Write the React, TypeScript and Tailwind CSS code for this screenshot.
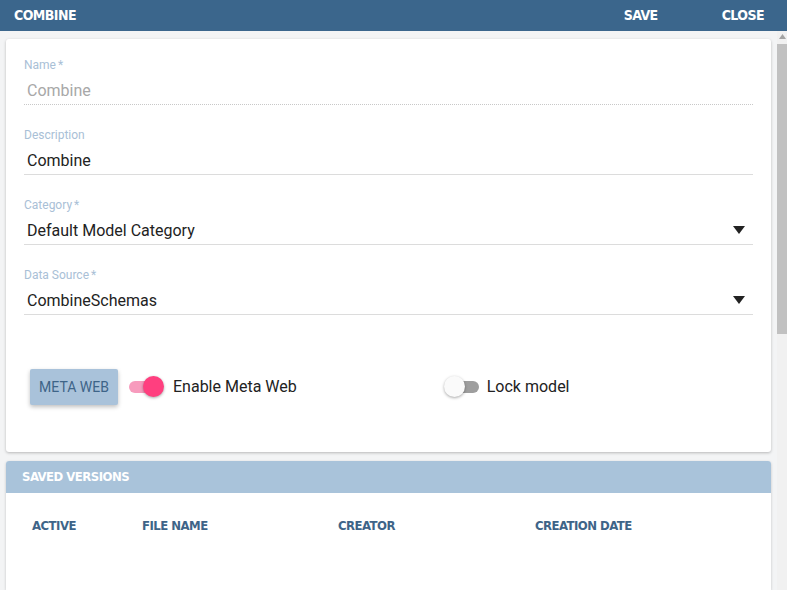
import React from 'react';

const cond = "[font-family:'DejaVu_Sans_Condensed','DejaVu_Sans',sans-serif] font-stretch-condensed font-bold tracking-[-0.04em]";

function Field({ label, value, required, disabled, select }: { label: string; value: string; required?: boolean; disabled?: boolean; select?: boolean }) {
  return (
    <div className="h-[70px] pt-[19px]">
      <div className="text-[12px] leading-[14px] text-[#a9c0d6]">
        {label}
        {required && <span className="ml-[2px]">*</span>}
      </div>
      <div
        className={`mt-[10px] flex h-[23px] items-start justify-between pl-[3px] text-[16px] leading-[18px] ${
          disabled ? 'border-b border-dotted border-[#c8c8c8] text-[#a8a8a8]' : 'border-b border-[#dcdcdc] text-[#222]'
        }`}
      >
        <span>{value}</span>
        {select && (
          <svg width="12" height="8" viewBox="0 0 12 8" className="mr-[8px] mt-[4px]">
            <path d="M0 0h12L6 8z" fill="#222" />
          </svg>
        )}
      </div>
    </div>
  );
}

function Toggle({ on }: { on: boolean }) {
  return (
    <div className="relative h-[22px] w-[36px]">
      <div className={`absolute left-[0px] top-[5px] h-[12px] w-[34px] rounded-full ${on ? 'bg-[#f79bbd]' : 'bg-[#9e9e9e]'}`} />
      <div
        className={`absolute top-0 h-[21px] w-[21px] rounded-full shadow-[0_1px_3px_rgba(0,0,0,0.35)] ${
          on ? 'left-[14px] bg-[#ff3f7f]' : 'left-[-1px] bg-[#fafafa]'
        }`}
      />
    </div>
  );
}

export default function App() {
  return (
    <div className="flex h-[590px] w-[787px] flex-col overflow-hidden bg-[#f3f4f5] font-['Roboto',sans-serif]">
      {/* Top bar */}
      <div className={`flex h-[31px] shrink-0 items-center bg-[#3b668c] pl-[14px] pr-[23px] text-[14px] text-white ${cond}`}>
        <span className="flex-1">COMBINE</span>
        <span className="mr-[64px]">SAVE</span>
        <span>CLOSE</span>
      </div>

      <div className="flex min-h-0 flex-1">
        <div className="flex flex-1 flex-col gap-[9px] pl-[6px] pr-[6px] pt-[8px]">
          {/* Model form */}
          <div className="h-[413px] rounded-[3px] bg-white px-[18px] shadow-[0_1px_3px_rgba(0,0,0,0.25)]">
            <Field label="Name" value="Combine" required disabled />
            <Field label="Description" value="Combine" />
            <Field label="Category" value="Default Model Category" required select />
            <Field label="Data Source" value="CombineSchemas" required select />

            <div className="mt-[50px] flex items-center">
              <button className="ml-[6px] h-[36px] w-[88px] rounded-[2px] bg-[#a9c2da] text-[14px] text-[#3e6488] shadow-[0_2px_4px_rgba(0,0,0,0.25)]">
                META WEB
              </button>
              <div className="ml-[11px] flex items-center">
                <Toggle on />
                <span className="ml-[8px] text-[16px] text-[#222]">Enable Meta Web</span>
              </div>
              <div className="ml-[148px] flex items-center">
                <Toggle on={false} />
                <span className="ml-[6px] text-[16px] text-[#222]">Lock model</span>
              </div>
            </div>
          </div>

          {/* Saved versions */}
          <div className="flex-1 rounded-t-[3px] bg-white shadow-[0_1px_3px_rgba(0,0,0,0.2)]">
            <div className={`flex h-[32px] items-center rounded-t-[3px] bg-[#a9c3da] pl-[16px] text-[13px] text-white ${cond}`}>
              SAVED VERSIONS
            </div>
            <div className={`flex pt-[23px] text-[13px] text-[#3e6488] ${cond}`}>
              <span className="ml-[26px] w-[110px]">ACTIVE</span>
              <span className="w-[196px]">FILE NAME</span>
              <span className="w-[197px]">CREATOR</span>
              <span>CREATION DATE</span>
            </div>
          </div>
        </div>

        {/* Scrollbar */}
        <div className="flex w-[10px] shrink-0 flex-col bg-[#f1f1f1]">
          <div className="flex h-[10px] items-center justify-center">
            <svg width="7" height="5" viewBox="0 0 7 5">
              <path d="M0 5L3.5 0L7 5z" fill="#a3a3a3" />
            </svg>
          </div>
          <div className="mt-[3px] h-[290px] bg-[#c1c1c1]" />
        </div>
      </div>
    </div>
  );
}
